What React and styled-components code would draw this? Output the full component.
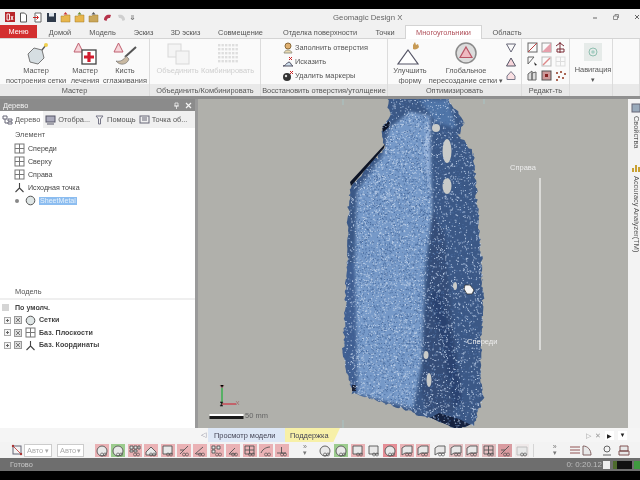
import React, { useMemo } from 'react'
import styled, { createGlobalStyle } from 'styled-components'

const Global = createGlobalStyle`
	html, body { margin: 0; padding: 0; background: #000; }
	body { font-family: "Liberation Sans", "Noto Sans", sans-serif; font-size: 7.4px; color: #555; }
`;

const Page = styled.div`
	width: 640px;
	height: 480px;
	display: flex;
	flex-direction: column;
	overflow: hidden;
	background: #000;
	filter: blur(0.4px);
`;

const BlackBand = styled.div`
	height: ${p => p.$h}px;
	flex: none;
	background: #000;
`;

const TitleBar = styled.div`
	height: 16px;
	flex: none;
	display: flex;
	align-items: center;
	padding-left: 5px;
	gap: 3px;
	background: #f1f1f1;
`;

const Title = styled.div`
	margin-left: 195px;
	color: #666;
	font-size: 7.8px;
	white-space: nowrap;
`;

const WinControls = styled.div`
	margin-left: auto;
	display: flex;
	align-items: center;
	gap: 15px;
`;

const TabBar = styled.div`
	height: 14px;
	box-sizing: border-box;
	flex: none;
	display: flex;
	background: #f1f1f1;
	border-bottom: 1px solid #d4d4d4;
`;

const MenuTab = styled.div`
	width: 37px;
	display: flex;
	align-items: center;
	justify-content: center;
	color: #fff;
	background: #d32f2f;
	margin-right: 11px;
`;

const Tab = styled.div`
	display: flex;
	align-items: center;
	justify-content: center;
	margin-left: ${p => p.$ml}px;
	width: ${p => p.$w}px;
	box-sizing: border-box;
	color: ${p => (p.$active ? '#b0505a' : '#555')};
	background: ${p => (p.$active ? '#fff' : 'transparent')};
	border: ${p => (p.$active ? '1px solid #d4d4d4' : 'none')};
	border-bottom: none;
	height: 14px;
	white-space: nowrap;
`;

const Ribbon = styled.div`
	height: 57px;
	flex: none;
	display: flex;
	background: #fafafa;
`;

const Group = styled.div`
	width: ${p => p.$w}px;
	flex: none;
	display: flex;
	flex-direction: column;
	border-right: 1px solid #dcdcdc;
	box-sizing: border-box;
`;

const GroupBody = styled.div`
	flex: 1;
	display: flex;
	align-items: flex-start;
	padding: ${p => p.$pad || '1px 0 0 0'};
	min-height: 0;
`;

const GroupLabel = styled.div`
	height: 12px;
	flex: none;
	display: flex;
	align-items: center;
	justify-content: center;
	background: #e9e9e9;
	color: #555;
	white-space: nowrap;
`;

const BigBtn = styled.div`
	width: ${p => p.$w}px;
	flex: none;
	display: flex;
	flex-direction: column;
	align-items: center;
	text-align: center;
	line-height: 9.5px;
	color: ${p => (p.$off ? '#cfcfcf' : '#555')};
	white-space: nowrap;
	svg { margin-bottom: ${p => p.$iconGap || 0}px; display: block; }
`;

const SmallCol = styled.div`
	display: flex;
	flex-direction: column;
	gap: 1px;
	padding-left: 21px;
`;

const SmallBtn = styled.div`
	height: 13px;
	display: flex;
	align-items: center;
	gap: 1px;
	white-space: nowrap;
`;

const IconGrid = styled.div`
	display: grid;
	grid-template-columns: repeat(3, 14px);
	grid-auto-rows: 14px;
`;

const IconCol = styled.div`
	display: flex;
	flex-direction: column;
	gap: 2px;
	margin: 2px 0 0 1px;
`;

const Gutter = styled.div`
	height: 3px;
	flex: none;
	background: #8f8f8f;
`;

const Middle = styled.div`
	height: 329px;
	flex: none;
	display: flex;
	background: #9a9a9a;
`;

const SidePanel = styled.div`
	width: 195px;
	flex: none;
	margin-right: 3px;
	display: flex;
	flex-direction: column;
	background: #fff;
`;

const PanelHead = styled.div`
	height: 12px;
	flex: none;
	display: flex;
	align-items: center;
	justify-content: space-between;
	padding: 0 3px;
	background: #8b8b8b;
	color: #f4f4f4;
`;

const PanelTools = styled.div`
	display: flex;
	align-items: center;
	gap: 5px;
`;

const SubTabs = styled.div`
	height: 17px;
	flex: none;
	display: flex;
	background: #f0f0f0;
`;

const SubTab = styled.div`
	display: flex;
	align-items: center;
	gap: 2px;
	padding: 0 ${p => p.$pad}px 0 2px;
	background: ${p => (p.$active ? '#fff' : 'transparent')};
	white-space: nowrap;
`;

const ColumnHead = styled.div`
	height: 13px;
	flex: none;
	display: flex;
	align-items: center;
	padding-left: 15px;
	border-bottom: ${p => (p.$line ? '2px solid #efefef' : 'none')};
	margin-top: ${p => p.$mt || 0}px;
`;

const Tree = styled.div`
	display: flex;
	flex-direction: column;
	padding-top: 1px;
	font-size: 7.1px;
`;

const TreeRow = styled.div`
	height: ${p => p.$h || 13}px;
	display: flex;
	align-items: center;
	gap: ${p => p.$gap || 3}px;
	padding-left: ${p => p.$indent}px;
	color: #444;
	font-weight: ${p => (p.$bold ? 700 : 400)};
	white-space: nowrap;
`;

const Picked = styled.span`
	background: #8cbdf0;
	color: #e6f1fb;
	padding: 0 1px;
`;

const Bullet = styled.span`
	width: 4px;
	height: 4px;
	border-radius: 50%;
	background: #888;
	margin: 0 3px 0 1px;
`;

const Viewport = styled.div`
	width: 430px;
	flex: none;
	position: relative;
	background: #b0b0ab;
	overflow: hidden;
	svg { position: absolute; left: 0; top: 0; }
`;

const ViewLabel = styled.span`
	position: absolute;
	left: ${p => p.$x}px;
	top: ${p => p.$y}px;
	color: #ececec;
	font-size: 7.5px;
`;

const ScaleText = styled.span`
	position: absolute;
	left: 47px;
	top: 312px;
	color: #666;
	font-size: 7.5px;
`;

const Dock = styled.div`
	flex: 1;
	display: flex;
	flex-direction: column;
	gap: 15px;
	align-items: flex-start;
	padding: 4px 0 0 3px;
	background: #f3f3f3;
`;

const DockItem = styled.div`
	writing-mode: vertical-rl;
	color: #555;
	white-space: nowrap;
	display: flex;
	align-items: center;
	gap: 3px;
`;

const DocTabs = styled.div`
	height: 14px;
	flex: none;
	display: flex;
	align-items: center;
	padding-left: 198px;
	background: #f5f5f5;
`;

const DocArrow = styled.span`
	width: 10px;
	text-align: center;
	color: #889;
	font-size: 7px;
`;

const DocTab = styled.div`
	height: 14px;
	width: ${p => p.$w}px;
	box-sizing: border-box;
	display: flex;
	align-items: center;
	padding-left: ${p => p.$padL}px;
	background: ${p => p.$bg};
	clip-path: ${p => (p.$slant ? 'polygon(0 0, 100% 0, 88% 100%, 0 100%)' : 'none')};
	color: #445;
	white-space: nowrap;
`;

const DocTools = styled.div`
	margin-left: auto;
	padding-right: 13px;
	display: flex;
	align-items: center;
	gap: 4px;
	color: #999;
`;

const MiniBtn = styled.span`
	width: 9px;
	height: 9px;
	display: flex;
	align-items: center;
	justify-content: center;
	background: #fff;
	color: #222;
	font-size: 6px;
`;

const Toolbar = styled.div`
	height: 16px;
	flex: none;
	display: flex;
	align-items: center;
	padding-left: 10px;
	background: #f3f3f3;
`;

const Combo = styled.div`
	width: ${p => p.$w}px;
	height: 13px;
	box-sizing: border-box;
	border: 1px solid #ccc;
	background: #fff;
	color: #aaa;
	display: flex;
	align-items: center;
	justify-content: space-between;
	padding: 0 2px;
	margin-left: ${p => p.$ml}px;
	overflow: hidden;
`;

const ToolIcon = styled.div`
	width: 14px;
	height: 13px;
	flex: none;
	margin-left: ${p => p.$ml ?? 2.4}px;
	background: ${p => p.$tint || 'transparent'};
	display: flex;
	align-items: center;
	justify-content: center;
`;

const Chevrons = styled.div`
	width: 14px;
	margin-left: ${p => p.$ml}px;
	color: #777;
	font-size: 7px;
	line-height: 6px;
	text-align: center;
`;

const ToolSep = styled.span`
	width: 1px;
	height: 13px;
	margin-left: 4px;
	background: #d5d5d5;
`;

const Status = styled.div`
	height: 13px;
	flex: none;
	display: flex;
	align-items: center;
	padding-left: 10px;
	background: #6e6e6e;
	color: #c9c9c9;
`;

const Clock = styled.span`
	margin-left: auto;
	color: #bdbdbd;
	font-size: 8px;
`;

const StatusWhite = styled.span`
	width: 7px;
	height: 8px;
	margin-left: 1px;
	background: #eee;
`;

const StatusMeter = styled.span`
	width: 19px;
	height: 8px;
	margin-left: 3px;
	background: linear-gradient(90deg, #4d6a2c 0 4px, #111 4px);
`;

const StatusGreen = styled.span`
	width: 6px;
	height: 8px;
	margin-left: 2px;
	background: #3f9a3f;
`;

// ---- small drawings ----
const Svg = ({ s = 12, h, children }) => (
	<svg width={s} height={h || s} viewBox={`0 0 ${s} ${h || s}`} fill="none">{children}</svg>
);

const Plane = () => (
	<Svg s={11}>
		<rect x="1" y="1" width="9" height="9" stroke="#777" />
		<path d="M5.500 1v9M1 5.500h9" stroke="#777" />
	</Svg>
);
const Axes = ({ c = '#444' }) => (
	<Svg s={11}>
		<path d="M5.500 1v5L1.500 10M5.500 6l4 4" stroke={c} strokeWidth="1.100" />
	</Svg>
);
const Ball = () => (
	<Svg s={11}>
		<circle cx="5.500" cy="5.500" r="4.300" fill="#dfe6e6" stroke="#555" />
	</Svg>
);
const Plus = () => (
	<Svg s={7}>
		<rect x=".5" y=".5" width="6" height="6" fill="#f4f4f4" stroke="#aaa" />
		<path d="M2 3.500h3M3.500 2v3" stroke="#666" />
	</Svg>
);
const Check = () => (
	<Svg s={8}>
		<rect x=".5" y=".5" width="7" height="7" fill="#ddd" stroke="#999" />
		<path d="M2 2l4 4M6 2l-4 4" stroke="#777" />
	</Svg>
);
const Gray = () => (
	<Svg s={7}><rect width="7" height="7" fill="#d5d5d5" /></Svg>
);

const Folder = ({ c = '#e8b64c', m = '#c33' }) => (
	<Svg s={11}>
		<path d="M1 4h3l1-1h5v7H1z" fill={c} stroke="#a07a2a" strokeWidth=".5" />
		<path d="M5.500 0l2 2.500h-4z" fill={m} />
	</Svg>
);

const QuickBar = () => (
	<>
		<Svg s={10}>
			<rect width="10" height="10" fill="#b8262b" />
			<path d="M2 2h2.500v6H2zM6 4l2 4M8 4l-2 4" stroke="#fff" strokeWidth=".9" />
		</Svg>
		<Svg s={11}><path d="M2.500 1h4l2 2v7h-6z" fill="#fff" stroke="#555" /></Svg>
		<Svg s={11}><path d="M3 1h6v9H3z" fill="#fff" stroke="#666" /><path d="M1 5.500h5M4.500 3.500l2 2-2 2" stroke="#c22" /></Svg>
		<Svg s={11}><rect x="1" y="1" width="9" height="9" fill="#2f3a4a" /><rect x="3" y="1" width="5" height="3.500" fill="#dfe5ec" /></Svg>
		<Folder />
		<Folder m="#6a8a2a" />
		<Folder c="#c9a65a" m="#555" />
		<Svg s={11}><path d="M2 8C2 4 5 2 9 3L8 6C6 5.500 5 6.500 4.500 9z" fill="#b5324a" /></Svg>
		<Svg s={11}><path d="M9 8C9 4 6 2 2 3l1 3c2-.5 3 .5 3.500 3z" fill="#cfcfcf" /></Svg>
		<Svg s={5} h={11}><path d="M1 4h3M1 6h3L2.500 8z" stroke="#444" strokeWidth=".6" /></Svg>
	</>
);

const Tri = ({ x = 1, y = 1, s = 9, c = '#c06070', f = '#f6d5da' }) => (
	<path d={`M${x + s / 2} ${y}l${s / 2} ${s}h${-s}z`} fill={f} stroke={c} />
);

const WizardIcon = () => (
	<Svg s={26}>
		<path d="M5 14l6-6 8 2 2 8-6 6-8-2z" fill="#d6dee2" stroke="#777" />
		<path d="M19 10l4-5" stroke="#555" strokeWidth="1.300" />
		<circle cx="23" cy="5" r="2" fill="#f0d050" />
	</Svg>
);
const HealIcon = () => (
	<Svg s={26}>
		<Tri x={2} y={3} s={9} />
		<rect x="10" y="10" width="14" height="14" fill="#fff" stroke="#444" strokeWidth="1.300" />
		<path d="M17 12v10M12 17h10" stroke="#d11c2e" strokeWidth="3.200" />
	</Svg>
);
const BrushIcon = () => (
	<Svg s={26}>
		<Tri x={2} y={3} s={9} />
		<path d="M24 7L13 17" stroke="#555" strokeWidth="2" />
		<path d="M4 21c4 1 8-1 10-5l3 3c-2 6-9 7-13 2z" fill="#c9b9a2" stroke="#666" strokeWidth=".6" />
	</Svg>
);
const MergeIcon = ({ grid }) => (
	<Svg s={26}>
		{grid
			? Array.from({ length: 30 }).map((_, i) => (
				<rect key={i} x={3 + (i % 6) * 3.500} y={4 + Math.floor(i / 6) * 4} width="2.400" height="2.400" fill="#dedede" />
			))
			: <>
				<rect x="3" y="4" width="13" height="13" fill="#f4f4f4" stroke="#d8d8d8" />
				<rect x="11" y="11" width="13" height="13" fill="#f4f4f4" stroke="#d8d8d8" />
			</>}
	</Svg>
);
const FormIcon = () => (
	<Svg s={28} h={26}>
		<path d="M12 10l10 14H2z" fill="#fff" stroke="#556" strokeWidth="1.200" />
		<path d="M17 9c2 1 5 0 6-2l-1-3-2 1-1-3-2 3z" fill="#c79a55" />
	</Svg>
);
const RemeshIcon = () => (
	<Svg s={24} h={26}>
		<circle cx="12" cy="13" r="10" fill="#dcdcdc" stroke="#8a8a8a" strokeWidth="1.500" />
		<path d="M12 7l6 10.500H6z" fill="#efb9c0" stroke="#b85565" strokeWidth="1.200" />
	</Svg>
);
const HoleIcon = () => (
	<Svg s={12}><circle cx="6" cy="4" r="3" fill="#e0b070" stroke="#8a6a3a" /><path d="M2 11c1-4 7-4 8 0z" fill="#e9d9b0" stroke="#998" /></Svg>
);
const WarpIcon = () => (
	<Svg s={12}><path d="M1 10c3 0 4-4 6-4s2 4 4 4z" fill="#cfe0ee" stroke="#556" /><path d="M7 1l3 3M10 1L7 4" stroke="#c22" /></Svg>
);
const MarkerIcon = () => (
	<Svg s={12}><circle cx="5" cy="7" r="4" fill="#333" /><circle cx="4" cy="6" r="1.200" fill="#ddd" /><path d="M8 1l3 3M11 1L8 4" stroke="#c22" /></Svg>
);
const MiniTri = ({ kind }) => (
	<Svg s={12}>
		{kind === 0 && <path d="M1.500 2h9L6 10z" stroke="#667" />}
		{kind === 1 && <path d="M6 2l4.500 8h-9z" stroke="#556" fill="#f6d5da" />}
		{kind === 2 && <path d="M6 1.500L10 6v3.500H2V6z" stroke="#778" fill="#f9dfe2" />}
	</Svg>
);
const EditIcon = ({ n }) => (
	<Svg s={13}>
		{n === 0 && <><rect x="2" y="2" width="9" height="9" stroke="#666" /><path d="M2 11l9-9" stroke="#b44" /></>}
		{n === 1 && <><rect x="2" y="2" width="9" height="9" stroke="#999" /><path d="M2 11l9-9v9z" fill="#e6a0ac" /></>}
		{n === 2 && <path d="M6 1v11M2 5l4-3 4 3M3 8h7v3H3z" stroke="#7a2a35" />}
		{n === 3 && <><path d="M2 2h6L2 9z" stroke="#666" /><path d="M8 7l3 3-2 .5z" fill="#222" /></>}
		{n === 4 && <><rect x="2" y="2" width="9" height="9" stroke="#bbb" /><path d="M3 10l7-7" stroke="#d88" strokeWidth="1.500" /></>}
		{n === 5 && <><rect x="2" y="2" width="9" height="9" stroke="#ddd" /><path d="M6.500 2v9M2 6.500h9" stroke="#ddd" /></>}
		{n === 6 && <path d="M2 11V5l4-3v9zM6 4l4-1v8H6z" fill="#ddd" stroke="#666" />}
		{n === 7 && <><rect x="2" y="2" width="9" height="9" fill="#c99" stroke="#555" /><rect x="5" y="5" width="3" height="3" fill="#822" /></>}
		{n === 8 && <path d="M2 3h2v2H2zM6 2h2v2H6zM10 4h2v2h-2zM4 7h2v2H4zM8 8h2v2H8zM2 10h2v2H2z" fill="#a65" />}
	</Svg>
);
const NavIcon = () => (
	<Svg s={18}>
		<rect width="18" height="18" fill="#e6ebe9" />
		<circle cx="9" cy="9" r="4" stroke="#8fbfb0" />
		<circle cx="9" cy="9" r="1.800" fill="#a8cfc4" />
	</Svg>
);

const toolShapes = {
	ball: 'M2 7a5 5 0 0 1 10 0a5 5 0 0 1-10 0z',
	dots: 'M2 2h3v3H2zM6 2h3v3H6zM10 2h2v3h-2zM2 6h3v2H2zM6 6h3v2H6z',
	house: 'M2 8l5-5 5 5v3H2z',
	sheet: 'M2 2h9v8H2z',
	pen: 'M3 10L11 2M3 6h4',
	pen2: 'M2 10l8-7M3 10h6',
	red: 'M2 2h3v3H2zM7 2h3v3H7zM2 6h3v3H2z',
	slash: 'M3 10l6-6M3 10h7',
	split: 'M2 2h9v8H2zM6.500 2v8M2 6h9',
	curve: 'M2 9c2-5 7-6 9-6',
	cross: 'M2 9h9M6.500 3v6',
	box: 'M2 4l3-2h7v7H5l-3 2z',
	faint: 'M2 3h10v8H2z'
};

const firstTools = [
	['ball', '#eab2b5'], ['ball', '#9ccc8e'], ['dots', '#eab2b5'], ['house', '#eab2b5'], ['sheet', '#eab2b5'], ['pen', '#eab2b5'],
	['pen2', '#eab2b5'], ['red', '#eab2b5'], ['slash', '#eab2b5'], ['split', '#eab2b5'], ['curve', '#eab2b5'], ['cross', '#eab2b5']
];
const secondTools = [
	['ball', null], ['ball', '#9ccc8e'], ['sheet', '#eab2b5'], ['sheet', null], ['ball', '#e58e96'], ['box', '#eab2b5'], ['box', '#eab2b5'],
	['box', null], ['box', '#e4bfc1'], ['box', '#e4bfc1'], ['split', '#e4bfc1'], ['pen', '#d99ba0'], ['faint', '#efe9e9']
];

const ToolGlyph = ({ d, eye = true, c = '#555' }) => (
	<Svg s={14} h={13}>
		<path d={d} stroke={c} strokeWidth=".9" fill={d.endsWith('z') ? '#e8e8e8' : 'none'} />
		{eye && <><circle cx="10" cy="10.500" r="1.500" stroke="#444" strokeWidth=".6" /><circle cx="7" cy="10.500" r="1.500" stroke="#444" strokeWidth=".6" /></>}
	</Svg>
);

// ---- point cloud ----
const inside = (poly, x, y) => {
	let c = false;
	for (let i = 0, j = poly.length - 1; i < poly.length; j = i++) {
		const [xi, yi] = poly[i], [xj, yj] = poly[j];
		if ((yi > y) !== (yj > y) && x < ((xj - xi) * (y - yi)) / (yj - yi) + xi) c = !c;
	}
	return c;
};

// all points are in page coords, the viewBox moves them into the viewport
const OUTLINE = [[387, 98], [447, 98], [451, 104], [465, 122], [458, 135], [473, 152], [482, 265], [483, 298], [480, 365], [483, 398], [473, 425], [457, 429], [413, 412], [353, 393], [343, 358], [347, 265], [349, 192], [353, 185], [385, 148], [382, 127], [390, 115]];
const FACE = [[357, 192], [383, 155], [390, 128], [410, 112], [430, 116], [432, 212], [425, 265], [421, 365], [413, 408], [353, 393], [352, 360], [355, 265]];
const HOLES = [[447, 151, 4.500, 12], [447, 186, 4.500, 8], [436, 128, 4, 4], [455, 286, 2, 4], [426, 355, 2.500, 4], [429, 380, 2.500, 7]];

const makeRnd = (start) => {
	let seed = start;
	return () => (seed = (seed * 16807) % 2147483647) / 2147483647;
};

// break every edge into short jittered pieces so the rim looks like loose points
const roughen = (poly, rnd) => {
	const out = [];
	poly.forEach(([x, y], i) => {
		const [nx, ny] = poly[(i + 1) % poly.length];
		const steps = Math.max(1, Math.round(Math.hypot(nx - x, ny - y) / 2.500));
		for (let k = 0; k < steps; k++) {
			out.push([
				+(x + ((nx - x) * k) / steps + (rnd() - 0.5) * 3).toFixed(1),
				+(y + ((ny - y) * k) / steps + (rnd() - 0.5) * 3).toFixed(1)
			]);
		}
	});
	return out;
};

const Cloud = () => {
	const { light, pale, dark, rim } = useMemo(() => {
		const rnd = makeRnd(7);
		let light = '', pale = '', dark = '';
		for (let i = 0; i < 30000; i++) {
			const x = 340 + rnd() * 148, y = 96 + rnd() * 336;
			if (!inside(OUTLINE, x, y)) continue;
			if (HOLES.some(([hx, hy, rx, ry]) => ((x - hx) / rx) ** 2 + ((y - hy) / ry) ** 2 < 1)) continue;
			const seg = `M${x.toFixed(1)} ${y.toFixed(1)}h1`;
			const r = rnd();
			if (inside(FACE, x, y)) {
				if (r < 0.24) pale += seg;
				else if (r < 0.44) dark += seg;
			} else if (r < 0.16) light += seg;
			else if (r < 0.26) dark += seg;
		}
		return { light, pale, dark, rim: roughen(OUTLINE, rnd) };
	}, []);
	return (
		<svg width="430" height="329" viewBox="198 99 430 329">
			<defs>
				<clipPath id="partRim"><polygon points={rim.join(' ')} /></clipPath>
				<filter id="soft" x="-10%" y="-10%" width="120%" height="120%"><feGaussianBlur stdDeviation="1.800" /></filter>
			</defs>
			<path d="M343 99v6M484 99v5M343 420v8" stroke="#a8c4c4" />
			<path d="M540 178v172" stroke="#e8e8e6" strokeWidth="1.500" />
			<g clipPath="url(#partRim)">
				<g filter="url(#soft)">
					<rect x="335" y="90" width="160" height="345" fill="#3b5886" />
					<polygon points={FACE.join(' ')} fill="#7699c8" />
					<path d="M345 265L341 358l12 35 5 0-3-130z" fill="#3f5f92" />
					<path d="M432 212l12 20 10 100 8 60-10 22-25-3-6-20 6-100z" fill="#344e78" />
					<path d="M440 290c10 40 18 70 22 112l-8 6c-8-40-14-75-24-115z" fill="#2c4270" />
					<path d="M420 100h28l8 28-20-6z" fill="#5075a8" />
					<path d="M430 116l-1 60 3 40-8-70z" fill="#9ab6de" />
				</g>
				<path d="M430 418l27 11 14-4-12-6-20-6z" fill="#16223f" />
			</g>
			<path d="M351 186l33-38 1-4-35 38zM382 127l7-6 1 5-7 6z" fill="#0d1426" />
			<path d="M352 385l4 0 0 6-4 0z" fill="#1a2138" />
			{HOLES.map(([x, y, rx, ry]) => <ellipse key={x + y} cx={x} cy={y} rx={rx} ry={ry} fill="#c9cbc9" />)}
			<path d={pale} stroke="#bccee6" />
			<path d={light} stroke="#b8cae4" />
			<path d={dark} stroke="#4a6c9e" />
			<path d="M465 285h5l4 5-2 4h-5l-3-5z" fill="#f5f5f5" stroke="#222" strokeWidth=".7" />
			{/* triad and scale bar */}
			<path d="M222 404v-16" stroke="#28b040" strokeWidth="1.300" />
			<path d="M222 404h14" stroke="#d03040" strokeWidth="1.200" />
			<path d="M220 385l2 3 2-3M236 401l3 4M239 401l-3 4" stroke="#a06a6a" strokeWidth=".7" />
			<path d="M220 402h3l-3 4h3" stroke="#333" strokeWidth=".7" />
			<rect x="209.500" y="414" width="34" height="2" fill="#fff" />
			<rect x="209.500" y="416" width="34" height="3" fill="#1a1a1a" />
		</svg>
	);
};

const App = () => {
	const topTabs = [['Домой', 24, 0], ['Модель', 25, 18], ['Эскиз', 19, 19], ['3D эскиз', 29, 18], ['Совмещение', 43, 19], ['Отделка поверхности', 74, 21], ['Точки', 20, 18]];
	return (
		<Page>
			<Global />
			<BlackBand $h={9} />
			<TitleBar>
				<QuickBar />
				<Title>Geomagic Design X</Title>
				<WinControls>
					<Svg s={6}><path d="M1 4h4" stroke="#666" /></Svg>
					<Svg s={6}><path d="M.5 2h4v3.500h-4zM2 2V.5h3.500V4" stroke="#777" strokeWidth=".8" /></Svg>
					<Svg s={6}><path d="M1 1l4 4M5 1L1 5" stroke="#666" /></Svg>
				</WinControls>
			</TitleBar>
			<TabBar>
				<MenuTab>Меню</MenuTab>
				{topTabs.map(([t, w, ml]) => <Tab key={t} $w={w} $ml={ml}>{t}</Tab>)}
				<Tab $w={77} $ml={10} $active>Многоугольники</Tab>
				<Tab $w={28} $ml={11}>Область</Tab>
			</TabBar>
			<Ribbon>
				<Group $w={150}>
					<GroupBody $pad="1px 0 0 5px">
						<BigBtn $w={62}><WizardIcon />Мастер<br />построения сетки</BigBtn>
						<BigBtn $w={36}><HealIcon />Мастер<br />лечения</BigBtn>
						<BigBtn $w={44}><BrushIcon />Кисть<br />сглаживания</BigBtn>
					</GroupBody>
					<GroupLabel>Мастер</GroupLabel>
				</Group>
				<Group $w={111}>
					<GroupBody $pad="1px 0 0 5px">
						<BigBtn $w={45} $off><MergeIcon />Объединить</BigBtn>
						<BigBtn $w={55} $off><MergeIcon grid />Комбинировать</BigBtn>
					</GroupBody>
					<GroupLabel>Объединить/Комбинировать</GroupLabel>
				</Group>
				<Group $w={127}>
					<GroupBody $pad="2px 0 0 0">
						<SmallCol>
							<SmallBtn><HoleIcon />Заполнить отверстия</SmallBtn>
							<SmallBtn><WarpIcon />Исказить</SmallBtn>
							<SmallBtn><MarkerIcon />Удалить маркеры</SmallBtn>
						</SmallCol>
					</GroupBody>
					<GroupLabel>Восстановить отверстия/утолщение</GroupLabel>
				</Group>
				<Group $w={134}>
					<GroupBody $pad="1px 0 0 4px">
						<BigBtn $w={36}><FormIcon />Улучшить<br />форму</BigBtn>
						<BigBtn $w={76}><RemeshIcon />Глобальное<br />пересоздание сетки ▾</BigBtn>
						<IconCol>
							<MiniTri kind={0} />
							<MiniTri kind={1} />
							<MiniTri kind={2} />
						</IconCol>
					</GroupBody>
					<GroupLabel>Оптимизировать</GroupLabel>
				</Group>
				<Group $w={48}>
					<GroupBody $pad="2px 0 0 4px">
						<IconGrid>
							{[0, 1, 2, 3, 4, 5, 6, 7, 8].map(n => <EditIcon key={n} n={n} />)}
						</IconGrid>
					</GroupBody>
					<GroupLabel>Редакт-ть</GroupLabel>
				</Group>
				<Group $w={43}>
					<GroupBody $pad="4px 0 0 5px">
						<BigBtn $w={36} $iconGap={4}><NavIcon />Навигация<br />▾</BigBtn>
					</GroupBody>
					<GroupLabel />
				</Group>
				<Group $w={27}>
					<GroupBody />
					<GroupLabel />
				</Group>
			</Ribbon>
			<Gutter />
			<Middle>
				<SidePanel>
					<PanelHead>
						Дерево
						<PanelTools>
							<Svg s={7}><path d="M2 1h3v3H2zM1 4h5M3.500 4v3" stroke="#eee" strokeWidth=".8" /></Svg>
							<Svg s={7}><path d="M1 1l5 5M6 1L1 6" stroke="#f4f4f4" strokeWidth="1.200" /></Svg>
						</PanelTools>
					</PanelHead>
					<SubTabs>
						<SubTab $active $pad={3}><Svg s={11}><path d="M1 2h4v3H1zM6 5h4v2H6zM6 8h4v2H6zM3 5v4h3" stroke="#667" /></Svg>Дерево</SubTab>
						<SubTab $pad={2}><Svg s={11}><rect x="1" y="2" width="9" height="6" fill="#aab" stroke="#556" /><path d="M2 10h7" stroke="#556" /></Svg>Отобра...</SubTab>
						<SubTab $pad={1}><Svg s={11}><path d="M2 2h7L6.500 5v5h-2V5z" stroke="#778" /></Svg>Помощь</SubTab>
						<SubTab $pad={2}><Svg s={11}><rect x="1" y="2" width="9" height="7" stroke="#667" /><path d="M3 4h5M3 6h5" stroke="#667" /></Svg>Точка об...</SubTab>
					</SubTabs>
					<ColumnHead>Элемент</ColumnHead>
					<Tree>
						<TreeRow $indent={14}><Plane />Спереди</TreeRow>
						<TreeRow $indent={14}><Plane />Сверху</TreeRow>
						<TreeRow $indent={14}><Plane />Справа</TreeRow>
						<TreeRow $indent={14}><Axes />Исходная точка</TreeRow>
						<TreeRow $indent={14}><Bullet /><Ball /><Picked>SheetMetal</Picked></TreeRow>
					</Tree>
					<ColumnHead $mt={78} $line>Модель</ColumnHead>
					<Tree>
						<TreeRow $indent={2} $gap={6} $bold><Gray />По умолч.</TreeRow>
						<TreeRow $indent={4} $bold $h={12.500}><Plus /><Check /><Ball />Сетки</TreeRow>
						<TreeRow $indent={4} $bold $h={12.500}><Plus /><Check /><Plane />Баз. Плоскости</TreeRow>
						<TreeRow $indent={4} $bold $h={12.500}><Plus /><Check /><Axes />Баз. Координаты</TreeRow>
					</Tree>
				</SidePanel>
				<Viewport>
					<Cloud />
					<ViewLabel $x={312} $y={64}>Справа</ViewLabel>
					<ViewLabel $x={269} $y={238}>Спереди</ViewLabel>
					<ScaleText>50 mm</ScaleText>
				</Viewport>
				<Dock>
					<DockItem>
						<Svg s={10}><rect x="1" y="1" width="8" height="8" fill="#9ab" stroke="#667" /></Svg>
						Свойства
					</DockItem>
					<DockItem>
						<Svg s={10}><path d="M1 9V5h2v4zM4 9V2h2v7zM7 9V4h2v5z" fill="#c9a030" /></Svg>
						Accuracy Analyzer(TM)
					</DockItem>
				</Dock>
			</Middle>
			<DocTabs>
				<DocArrow>◁</DocArrow>
				<DocTab $w={77} $padL={6} $bg="#dde7f6">Просмотр модели</DocTab>
				<DocTab $w={55} $padL={5} $bg="#f7f0a8" $slant>Поддержка</DocTab>
				<DocTools>
					<span>▷</span><span>✕</span><MiniBtn>▶</MiniBtn><MiniBtn>▼</MiniBtn>
				</DocTools>
			</DocTabs>
			<Toolbar>
				<ToolIcon $ml={0}>
					<Svg s={12}><rect x="2" y="2" width="8" height="8" stroke="#667" /><path d="M2 2l8 8" stroke="#c55" /><circle cx="2" cy="2" r="1.200" fill="#a33" /><circle cx="10" cy="10" r="1.200" fill="#a33" /></Svg>
				</ToolIcon>
				<Combo $w={28} $ml={0}>Авто<span>▾</span></Combo>
				<Combo $w={27} $ml={5}>Авто<span>▾</span></Combo>
				{firstTools.map(([k, tint], i) => (
					<ToolIcon key={i} $tint={tint} $ml={i === 0 ? 11 : undefined}><ToolGlyph d={toolShapes[k]} /></ToolIcon>
				))}
				<Chevrons $ml={8.600}>»<br />▾</Chevrons>
				{secondTools.map(([k, tint], i) => (
					<ToolIcon key={i} $tint={tint} $ml={i === 0 ? 6 : undefined}><ToolGlyph d={toolShapes[k]} c={k === 'faint' ? '#bbb' : '#555'} /></ToolIcon>
				))}
				<ToolSep />
				<Chevrons $ml={14}>»<br />▾</Chevrons>
				<ToolIcon $ml={6}><ToolGlyph d="M2 3h10M2 9h10M2 6h10" c="#844" eye={false} /></ToolIcon>
				<ToolIcon $ml={-2}><ToolGlyph d="M3 11V2c5 0 8 4 8 9z" c="#755" eye={false} /></ToolIcon>
				<ToolIcon $ml={6}><ToolGlyph d="M3 11h8M4 5a3 3 0 1 0 6 0a3 3 0 1 0-6 0" c="#555" eye={false} /></ToolIcon>
				<ToolIcon $ml={3}><ToolGlyph d="M3 2h8v5H3zM2 7h10v4H2z" c="#744" eye={false} /></ToolIcon>
			</Toolbar>
			<Status>
				Готово
				<Clock>0: 0:20.12</Clock>
				<StatusWhite />
				<StatusMeter />
				<StatusGreen />
			</Status>
			<BlackBand $h={9} />
		</Page>
	)
};

export default App
